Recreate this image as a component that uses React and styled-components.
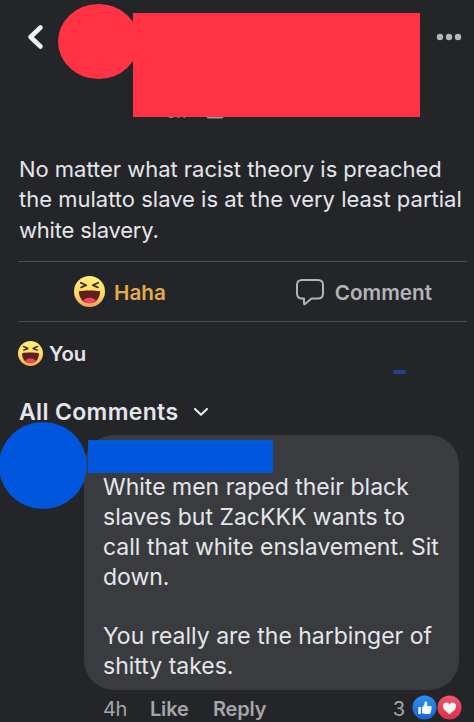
import React from 'react'
import styled, { createGlobalStyle } from 'styled-components'

const GlobalStyle = createGlobalStyle`
  * {
    box-sizing: border-box;
  }

  body {
    margin: 0;
    background: #242529;
    font-family: Inter, 'Liberation Sans', sans-serif;
    overflow: hidden;
  }
`

const HahaIcon = ({ size, id }) => (
  <Icon width={size} height={size} viewBox='0 0 32 32'>
    <defs>
      <linearGradient id={id} x1='0' y1='0' x2='0' y2='1'>
        <stop offset='0' stopColor='#ffef78' />
        <stop offset='0.6' stopColor='#ffd767' />
        <stop offset='1' stopColor='#f3a252' />
      </linearGradient>
    </defs>
    <circle cx='16' cy='16' r='16' fill={`url(#${id})`} />
    <path d='M7 7l5.600 2.600-5.200 2.100M25 7l-5.600 2.600 5.200 2.100' fill='none' stroke='#3d2814' strokeWidth='1.800' strokeLinecap='round' strokeLinejoin='round' />
    <path d='M6 15.600c3.600-1 16.400-1 20 0 .9.2 1 .9.9 1.700C26.200 23.800 22 28.200 16 28.200S5.800 23.800 5.100 17.300c-.1-.8 0-1.500.9-1.700z' fill='#5b211a' />
    <path d='M9.600 25.400c1-2.200 3.500-3 6.400-3s5.400.8 6.400 3c-1.700 1.800-3.900 2.800-6.400 2.800s-4.700-1-6.400-2.800z' fill='#f34462' />
  </Icon>
)

const LikeBadge = () => (
  <Icon width='25' height='25' viewBox='0 0 25 25'>
    <defs>
      <linearGradient id='likeFill' x1='0' y1='0' x2='0' y2='1'>
        <stop offset='0' stopColor='#2f91ee' />
        <stop offset='1' stopColor='#1763cf' />
      </linearGradient>
    </defs>
    <circle cx='12.5' cy='12.5' r='12' fill='url(#likeFill)' />
    <path d='M6.300 12h2.500v7H6.300zM10 12.300c1.500-1 2.300-2.300 2.500-4.300.1-1.200.7-1.700 1.500-1.500 1.300.3 1.700 2.100 1.100 4.500h3.100c1.500 0 1.900 1.500 1 2.300.7.700.6 1.700-.2 2.200.4.800.1 1.600-.6 2 .1 1-.5 1.500-1.600 1.500h-3.300c-1.400 0-2.500-.3-3.500-.9z' fill='#f5f8fc' />
  </Icon>
)

const LoveBadge = () => (
  <Icon width='25' height='25' viewBox='0 0 25 25'>
    <defs>
      <linearGradient id='loveFill' x1='0' y1='0' x2='0' y2='1'>
        <stop offset='0' stopColor='#f0566c' />
        <stop offset='1' stopColor='#dc2e4b' />
      </linearGradient>
    </defs>
    <circle cx='12.5' cy='12.5' r='12' fill='url(#loveFill)' />
    <path d='M12.500 19.200C8.500 16.400 5.900 14.100 5.900 11.100c0-4 4.800-5 6.600-1.700 1.800-3.300 6.600-2.300 6.600 1.700 0 3-2.600 5.300-6.600 8.100z' fill='#fdf3f4' />
  </Icon>
)

const postLines = [
  { text: 'No matter what racist theory is preached', spacing: '-0.03px' },
  { text: 'the mulatto slave is at the very least partial', spacing: '0' },
  { text: 'white slavery.', spacing: '-0.2px' },
]

const commentLines = [
  'White men raped their black',
  'slaves but ZacKKK wants to',
  'call that white enslavement. Sit',
  'down.',
  '',
  'You really are the harbinger of',
  'shitty takes.',
]

export default function App() {
  return (
    <Screen>
      <GlobalStyle />
      <Header>
        <Icon width='17' height='26' viewBox='0 0 17 26'>
          <path d='M13.500 3.500L3.500 13l10 9.500' fill='none' stroke='#eef0f4' strokeWidth='4.600' strokeLinecap='round' strokeLinejoin='round' />
        </Icon>
        <Icon width='26' height='8' viewBox='0 0 26 8' fill='#b5b6ba'>
          <circle cx='4' cy='4' r='3.200' />
          <circle cx='13' cy='4' r='3.200' />
          <circle cx='22' cy='4' r='3.200' />
        </Icon>
        <Meta>
          <span>5h</span>
          <Icon width='18' height='14' viewBox='0 0 18 14'>
            <rect x='0.500' y='1' width='17' height='12.500' rx='2' fill='#9b9ca1' />
            <path d='M3 11.600h12' stroke='#55565a' strokeDasharray='2 1.500' />
          </Icon>
        </Meta>
        <AvatarCover />
        <NameCover />
      </Header>

      <PostText>
        {postLines.map((line) => <PostLine key={line.text} $spacing={line.spacing}>{line.text}</PostLine>)}
      </PostText>

      <Actions>
        <Action $color='#e5ab4c' $gap='9px'>
          <HahaIcon size='31' id='hahaLarge' />
          <Label>Haha</Label>
        </Action>
        <Action $color='#b3b4b8' $gap='10px'>
          <Icon width='30' height='28' viewBox='0 0 30 28'>
            <path d='M7 2h16c3.300 0 5 1.700 5 5v8.500c0 3.300-1.700 5-5 5h-6.500L10 26c-.6.500-1 .3-1-.4v-5.100H7c-3.300 0-5-1.700-5-5V7c0-3.300 1.700-5 5-5z' fill='none' stroke='#b3b4b8' strokeWidth='2' strokeLinejoin='round' />
          </Icon>
          <Label>Comment</Label>
        </Action>
      </Actions>

      <Reactions>
        <HahaIcon size='25' id='hahaSmall' />
        <span>You</span>
        <Smudge />
      </Reactions>

      <Filter>
        <span>All Comments</span>
        <Icon width='16' height='10' viewBox='0 0 16 10'>
          <path d='M2 2l6 5.800L14 2' fill='none' stroke='#e4e6eb' strokeWidth='2.200' strokeLinecap='round' strokeLinejoin='round' />
        </Icon>
      </Filter>

      <Comment>
        <CommenterCover />
        <Bubble>
          <CommenterNameCover />
          {commentLines.map((line, i) => <CommentLine key={i}>{line}</CommentLine>)}
        </Bubble>
        <Footer>
          <Time>4h</Time>
          <Link $width='63px'>Like</Link>
          <Link>Reply</Link>
          <Count>3</Count>
          <LikeBadge />
          <LoveBadge />
        </Footer>
      </Comment>
    </Screen>
  )
}

const Screen = styled.main`
  display: flex;
  flex-direction: column;
  width: 474px;
  height: 722px;
  background: #242529;
  color: #e4e6eb;
  overflow: hidden;

  & > * {
    flex-shrink: 0;
  }
`

const Icon = styled.svg`
  display: block;
  flex: none;
`

const Header = styled.header`
  position: relative;
  display: flex;
  justify-content: space-between;
  align-items: center;
  height: 74px;
  margin-bottom: 80px;
  padding: 0 12px 0 27px;
`

const Meta = styled.div`
  position: absolute;
  top: 103px;
  left: 166px;
  display: flex;
  align-items: flex-end;
  gap: 20px;
  height: 16px;
  color: #8b8c90;
  font-size: 17px;
  line-height: 14px;
`

const Cover = styled.div`
  position: absolute;
  background: ${(props) => props.$color};
`

const AvatarCover = styled(Cover).attrs({ $color: '#ff3344' })`
  top: 4px;
  left: 58px;
  width: 81px;
  height: 75px;
  border-radius: 50%;
`

const NameCover = styled(Cover).attrs({ $color: '#ff3344' })`
  top: 13px;
  left: 133px;
  width: 287px;
  height: 103.5px;
`

const PostText = styled.div`
  height: 107px;
  padding-left: 19px;
`

const PostLine = styled.p`
  height: 30.3px;
  margin: 0;
  font-size: 22px;
  line-height: 30px;
  letter-spacing: ${(props) => props.$spacing};
  white-space: nowrap;
`

const CommentLine = styled.p`
  height: 29.9px;
  margin: 0;
  font-size: 23px;
  line-height: 30px;
  letter-spacing: 0;
  white-space: nowrap;
`

const Actions = styled.div`
  display: flex;
  justify-content: space-between;
  height: 61px;
  margin: 0 7px 0 18px;
  padding: 0 35px 0 56px;
  border-top: 1px solid #4b4c50;
  border-bottom: 1px solid #4b4c50;
`

const Action = styled.div`
  display: flex;
  align-items: center;
  gap: ${(props) => props.$gap};
  color: ${(props) => props.$color};
  font-size: 20.7px;
  font-weight: 600;
`

const Label = styled.span`
  padding-top: 2px;
`

const Reactions = styled.div`
  position: relative;
  display: flex;
  align-items: center;
  gap: 6px;
  height: 62px;
  padding-left: 18px;
  font-size: 20.3px;
  font-weight: 600;
`

const Smudge = styled(Cover).attrs({ $color: '#1d4590' })`
  top: 48px;
  left: 393px;
  width: 13px;
  height: 4px;
  border-radius: 2px;
`

const Filter = styled.div`
  display: flex;
  align-items: center;
  gap: 15px;
  height: 51px;
  padding: 5px 0 0 19px;
  font-size: 23px;
  font-weight: 600;
  letter-spacing: 0.35px;
`

const Comment = styled.article`
  position: relative;
  padding-left: 84px;
`

const Bubble = styled.div`
  position: relative;
  width: 375px;
  height: 255px;
  padding: 37px 0 0 19px;
  border-radius: 30px;
  background: #3a3b3f;
`

const CommenterCover = styled(Cover).attrs({ $color: '#0056dc' })`
  top: -13px;
  left: -1px;
  width: 88px;
  height: 87px;
  border-radius: 50%;
  z-index: 1;
`

const CommenterNameCover = styled(Cover).attrs({ $color: '#0056dc' })`
  top: 5px;
  left: 4px;
  width: 185px;
  height: 33px;
`

const Footer = styled.footer`
  display: flex;
  align-items: center;
  height: 35px;
  padding-left: 19px;
  color: #a5a6aa;
  font-size: 20px;

  & > span {
    padding-top: 3px;
  }
`

const Time = styled.span`
  width: 47px;
  letter-spacing: -0.4px;
`

const Link = styled.span`
  width: ${(props) => props.$width || 'auto'};
  font-weight: 600;
  letter-spacing: -0.2px;
`

const Count = styled.span`
  margin-left: auto;
  margin-right: 7px;

  & ~ svg:last-child {
    margin-right: 12px;
  }
`
